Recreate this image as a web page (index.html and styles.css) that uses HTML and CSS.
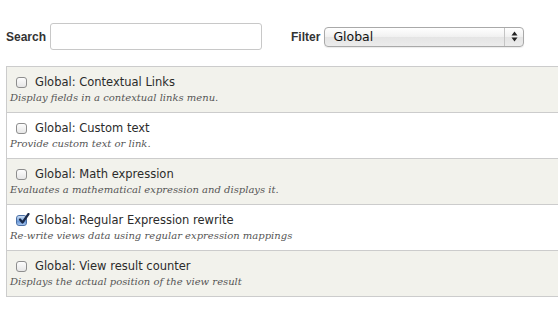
FILE: index.html
```html
<!DOCTYPE html>
<html>
<head>
<meta charset="utf-8">
<link rel="stylesheet" href="styles.css">
</head>
<body>
<div class="filters">
  <label class="flabel">Search</label>
  <input class="search" type="text">
  <label class="flabel filter-label">Filter</label>
  <div class="select">
    <span class="select-text">Global</span>
    <span class="select-arrows">
      <svg width="7" height="11" viewBox="0 0 7 11"><path d="M3.5 0.5 L6.5 4.5 L0.5 4.5 Z" fill="#222"/><path d="M3.5 10.5 L6.5 6.5 L0.5 6.5 Z" fill="#222"/></svg>
    </span>
  </div>
</div>
<div class="list">
  <div class="row odd">
    <div class="title"><span class="cb"></span>Global: Contextual Links</div>
    <div class="desc">Display fields in a contextual links menu.</div>
  </div>
  <div class="row">
    <div class="title"><span class="cb"></span>Global: Custom text</div>
    <div class="desc">Provide custom text or link.</div>
  </div>
  <div class="row odd">
    <div class="title"><span class="cb"></span>Global: Math expression</div>
    <div class="desc">Evaluates a mathematical expression and displays it.</div>
  </div>
  <div class="row">
    <div class="title"><span class="cb checked"><svg width="13" height="13" viewBox="0 0 13 13"><path d="M3 6.5 L5.5 9.5 L11.5 1" fill="none" stroke="#1a2a4a" stroke-width="2.2" stroke-linecap="round" stroke-linejoin="round"/></svg></span>Global: Regular Expression rewrite</div>
    <div class="desc">Re-write views data using regular expression mappings</div>
  </div>
  <div class="row odd">
    <div class="title"><span class="cb"></span>Global: View result counter</div>
    <div class="desc">Displays the actual position of the view result</div>
  </div>
</div>
</body>
</html>
```

FILE: styles.css
```css
html, body {
  margin: 0;
  padding: 0;
  background: #fff;
}
body {
  font-family: "DejaVu Sans", "Liberation Sans", sans-serif;
  color: #333;
  width: 558px;
  height: 324px;
  overflow: hidden;
}
.filters {
  display: flex;
  align-items: center;
  padding: 23px 0 0 6px;
  height: 27px;
}
.flabel {
  font-family: "Liberation Sans", Arial, sans-serif;
  font-weight: bold;
  font-size: 12px;
  color: #333;
}
.search {
  box-sizing: border-box;
  width: 212px;
  height: 27px;
  margin: 0 0 0 4px;
  border: 1px solid #c8c8c8;
  border-radius: 3px;
  background: #fff;
  padding: 0 4px;
  outline: none;
}
.filter-label {
  margin-left: 29px;
}
.select {
  box-sizing: border-box;
  margin-left: 4px;
  width: 200px;
  height: 20px;
  border: 1px solid #a9a9a9;
  border-radius: 4px;
  background: linear-gradient(#ffffff, #f0f0f0 50%, #e4e4e4 51%, #ececec);
  display: flex;
  align-items: center;
  box-shadow: 0 1px 1px rgba(0,0,0,0.08);
}
.select-text {
  flex: 1;
  padding-left: 8px;
  font-family: "DejaVu Sans", sans-serif;
  font-size: 12.5px;
  color: #111;
}
.select-arrows {
  width: 18px;
  height: 100%;
  border-left: 1px solid #c4c4c4;
  display: flex;
  align-items: center;
  justify-content: center;
}
.select-arrows svg { display: block; }
.list {
  margin: 16px 0 0 6px;
  border-top: 1px solid #ccc;
  border-left: 1px solid #ccc;
}
.row {
  box-sizing: border-box;
  height: 46px;
  border-bottom: 1px solid #ccc;
  padding: 8px 0 0 9px;
  background: #fff;
}
.row.odd {
  background: #f2f2ec;
}
.title {
  display: flex;
  align-items: center;
  font-size: 11.5px;
  line-height: 15px;
  color: #2b2b2b;
}
.cb {
  box-sizing: border-box;
  width: 11px;
  height: 11px;
  border: 1px solid #8e8e8e;
  border-radius: 3px;
  background: linear-gradient(#fdfdfd, #e6e6e6);
  margin-right: 8px;
  position: relative;
  flex: none;
}
.cb.checked {
  border-color: #4a6fa5;
  background: linear-gradient(#cfe0f5, #7fa8dd 50%, #5c8ed3 51%, #a9c7ef);
}
.cb.checked svg {
  position: absolute;
  left: 0;
  top: -3px;
}
.desc {
  font-family: "DejaVu Serif", "Liberation Serif", serif;
  font-style: italic;
  font-size: 10px;
  line-height: 14px;
  margin-top: 1px;
  margin-left: -6px;
  color: #555;
}
```
